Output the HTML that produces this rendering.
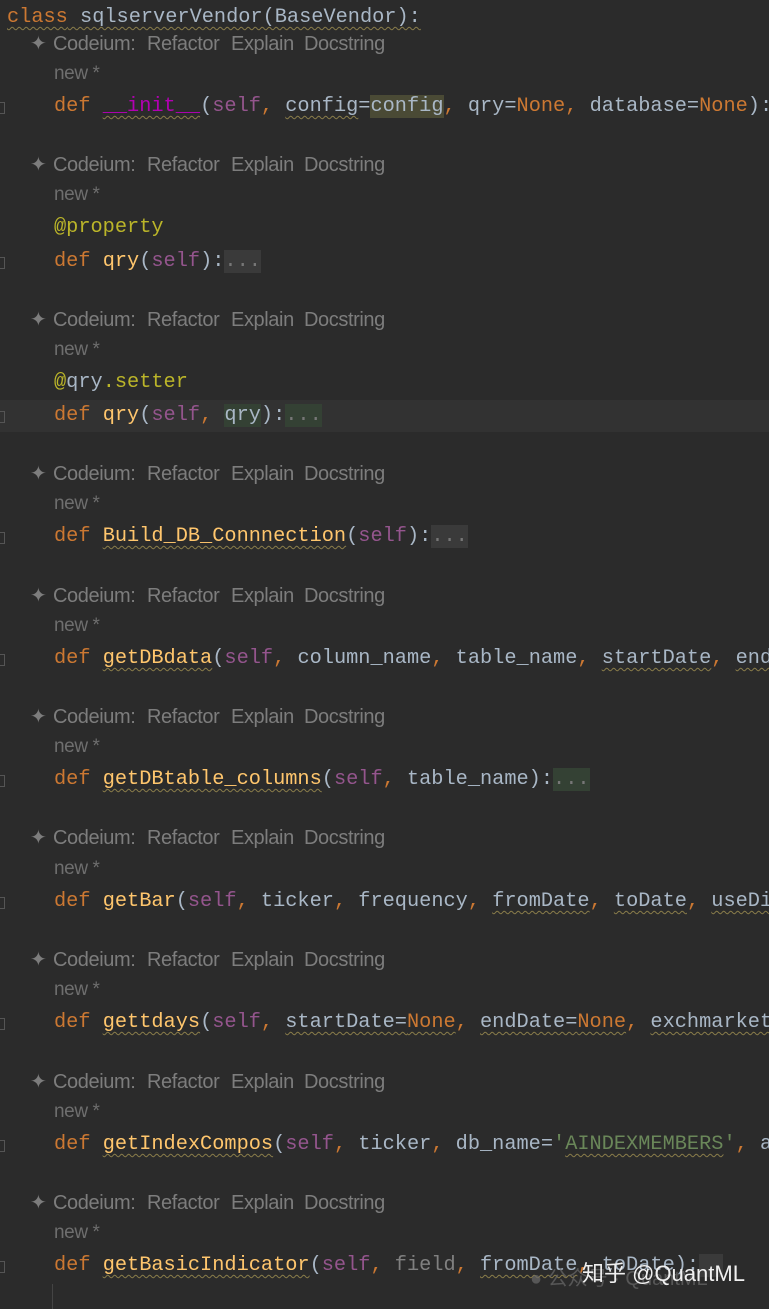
<!DOCTYPE html>
<html><head><meta charset="utf-8"><style>
body{margin:0;width:769px;height:1309px;background:#2b2b2b;overflow:hidden;position:relative}
.l{position:absolute;left:54px;right:0;overflow:hidden;height:30px;line-height:30px;white-space:pre;font-family:"Liberation Mono",monospace;font-size:20.3px;color:#a9b7c6}
.c{position:absolute;left:0;height:30px;line-height:30px;white-space:pre;font-family:"Liberation Sans",sans-serif;font-size:20px;letter-spacing:-0.4px;color:#7d7d7d}
.c span{position:absolute;top:0}
.n{position:absolute;left:54px;height:30px;line-height:30px;font-family:"Liberation Sans",sans-serif;font-size:19px;letter-spacing:-0.4px;color:#6e6e6e}
.k{color:#cc7832}.f{color:#ffc66d}.s{color:#94558d}.m{color:#b200b2}.g{color:#6a8759}.d{color:#bbb529}.gr{color:#808080}
.w{text-decoration:underline wavy #8a7d4a;text-decoration-thickness:1px;text-underline-offset:4px}
.fold{position:absolute;left:-4px;width:7px;height:10px;border:1px solid #555}
.box{background:#3a3a3a;color:#777}
.gbox{background:#344134}
</style></head><body>
<div style="position:absolute;left:0;top:400px;width:769px;height:32px;background:#323232"></div>
<div class="l" style="left:7px;top:3px"><span class="k w">class</span><span class="w"> sqlserverVendor(BaseVendor):</span></div>

<div class="c" style="top:29px"><span style="left:30px">✦</span><span style="left:53px">Codeium:</span><span style="left:147px">Refactor</span><span style="left:231px">Explain</span><span style="left:304px">Docstring</span></div>
<div class="n" style="top:59px">new *</div>
<div class="fold" style="top:102px"></div>
<div class="l" style="top:92px"><span class="k">def </span><span class="m w">__init__</span>(<span class="s">self</span><span class="k">, </span><span class="w">config</span>=<span style="background:#4a4a35">config</span><span class="k">, </span>qry=<span class="k">None, </span>database=<span class="k">None</span>):<span class="box">...</span></div>

<div class="c" style="top:150px"><span style="left:30px">✦</span><span style="left:53px">Codeium:</span><span style="left:147px">Refactor</span><span style="left:231px">Explain</span><span style="left:304px">Docstring</span></div>
<div class="n" style="top:180px">new *</div>
<div class="l d" style="top:213px">@property</div>
<div class="fold" style="top:257px"></div>
<div class="l" style="top:247px"><span class="k">def </span><span class="f">qry</span>(<span class="s">self</span>):<span class="box">...</span></div>

<div class="c" style="top:305px"><span style="left:30px">✦</span><span style="left:53px">Codeium:</span><span style="left:147px">Refactor</span><span style="left:231px">Explain</span><span style="left:304px">Docstring</span></div>
<div class="n" style="top:335px">new *</div>
<div class="l" style="top:368px"><span class="d">@</span>qry<span class="d">.setter</span></div>
<div class="fold" style="top:411px"></div>
<div class="l" style="top:401px"><span class="k">def </span><span class="f">qry</span>(<span class="s">self</span><span class="k">, </span><span class="gbox">qry</span>):<span class="gbox" style="color:#777">...</span></div>

<div class="c" style="top:459px"><span style="left:30px">✦</span><span style="left:53px">Codeium:</span><span style="left:147px">Refactor</span><span style="left:231px">Explain</span><span style="left:304px">Docstring</span></div>
<div class="n" style="top:489px">new *</div>
<div class="fold" style="top:532px"></div>
<div class="l" style="top:522px"><span class="k">def </span><span class="f w">Build_DB_Connnection</span>(<span class="s">self</span>):<span class="box">...</span></div>

<div class="c" style="top:581px"><span style="left:30px">✦</span><span style="left:53px">Codeium:</span><span style="left:147px">Refactor</span><span style="left:231px">Explain</span><span style="left:304px">Docstring</span></div>
<div class="n" style="top:611px">new *</div>
<div class="fold" style="top:654px"></div>
<div class="l" style="top:644px"><span class="k">def </span><span class="f w">getDBdata</span>(<span class="s">self</span><span class="k">, </span>column_name<span class="k">, </span>table_name<span class="k">, </span><span class="w">startDate</span><span class="k">, </span><span class="w">endDate</span></div>

<div class="c" style="top:702px"><span style="left:30px">✦</span><span style="left:53px">Codeium:</span><span style="left:147px">Refactor</span><span style="left:231px">Explain</span><span style="left:304px">Docstring</span></div>
<div class="n" style="top:732px">new *</div>
<div class="fold" style="top:775px"></div>
<div class="l" style="top:765px"><span class="k">def </span><span class="f w">getDBtable_columns</span>(<span class="s">self</span><span class="k">, </span>table_name):<span class="gbox" style="color:#777">...</span></div>

<div class="c" style="top:823px"><span style="left:30px">✦</span><span style="left:53px">Codeium:</span><span style="left:147px">Refactor</span><span style="left:231px">Explain</span><span style="left:304px">Docstring</span></div>
<div class="n" style="top:854px">new *</div>
<div class="fold" style="top:897px"></div>
<div class="l" style="top:887px"><span class="k">def </span><span class="f">getBar</span>(<span class="s">self</span><span class="k">, </span>ticker<span class="k">, </span>frequency<span class="k">, </span><span class="w">fromDate</span><span class="k">, </span><span class="w">toDate</span><span class="k">, </span><span class="w">useDiv</span></div>

<div class="c" style="top:945px"><span style="left:30px">✦</span><span style="left:53px">Codeium:</span><span style="left:147px">Refactor</span><span style="left:231px">Explain</span><span style="left:304px">Docstring</span></div>
<div class="n" style="top:975px">new *</div>
<div class="fold" style="top:1018px"></div>
<div class="l" style="top:1008px"><span class="k">def </span><span class="f w">gettdays</span>(<span class="s">self</span><span class="k">, </span><span class="w">startDate=<span class="k">None</span></span><span class="k">, </span><span class="w">endDate=<span class="k">None</span></span><span class="k">, </span><span class="w">exchmarket=</span></div>

<div class="c" style="top:1067px"><span style="left:30px">✦</span><span style="left:53px">Codeium:</span><span style="left:147px">Refactor</span><span style="left:231px">Explain</span><span style="left:304px">Docstring</span></div>
<div class="n" style="top:1097px">new *</div>
<div class="fold" style="top:1140px"></div>
<div class="l" style="top:1130px"><span class="k">def </span><span class="f w">getIndexCompos</span>(<span class="s">self</span><span class="k">, </span>ticker<span class="k">, </span>db_name=<span class="g">'<span class="w">AINDEXMEMBERS</span>'</span><span class="k">, </span>al</div>

<div class="c" style="top:1188px"><span style="left:30px">✦</span><span style="left:53px">Codeium:</span><span style="left:147px">Refactor</span><span style="left:231px">Explain</span><span style="left:304px">Docstring</span></div>
<div class="n" style="top:1218px">new *</div>
<div class="fold" style="top:1261px"></div>
<div class="l" style="top:1251px"><span class="k">def </span><span class="f w">getBasicIndicator</span>(<span class="s">self</span><span class="k">, </span><span class="gr">field</span><span class="k">, </span><span class="w">fromDate</span><span class="k">, </span>toDate):<span class="box">  </span></div>
<div style="position:absolute;left:52px;top:1284px;width:1px;height:25px;background:#444"></div>

<div style="position:absolute;left:530px;top:1262px;font-family:'Liberation Sans','Noto Sans CJK SC',sans-serif;font-size:20px;color:#6a6a6a;opacity:.7;white-space:nowrap">● 公众号 · QuantML</div>
<div style="position:absolute;left:582px;top:1256px;font-family:'Liberation Sans','Noto Sans CJK SC',sans-serif;font-size:22px;color:#f0f0f0;white-space:nowrap">知乎 @QuantML</div>
</body></html>
